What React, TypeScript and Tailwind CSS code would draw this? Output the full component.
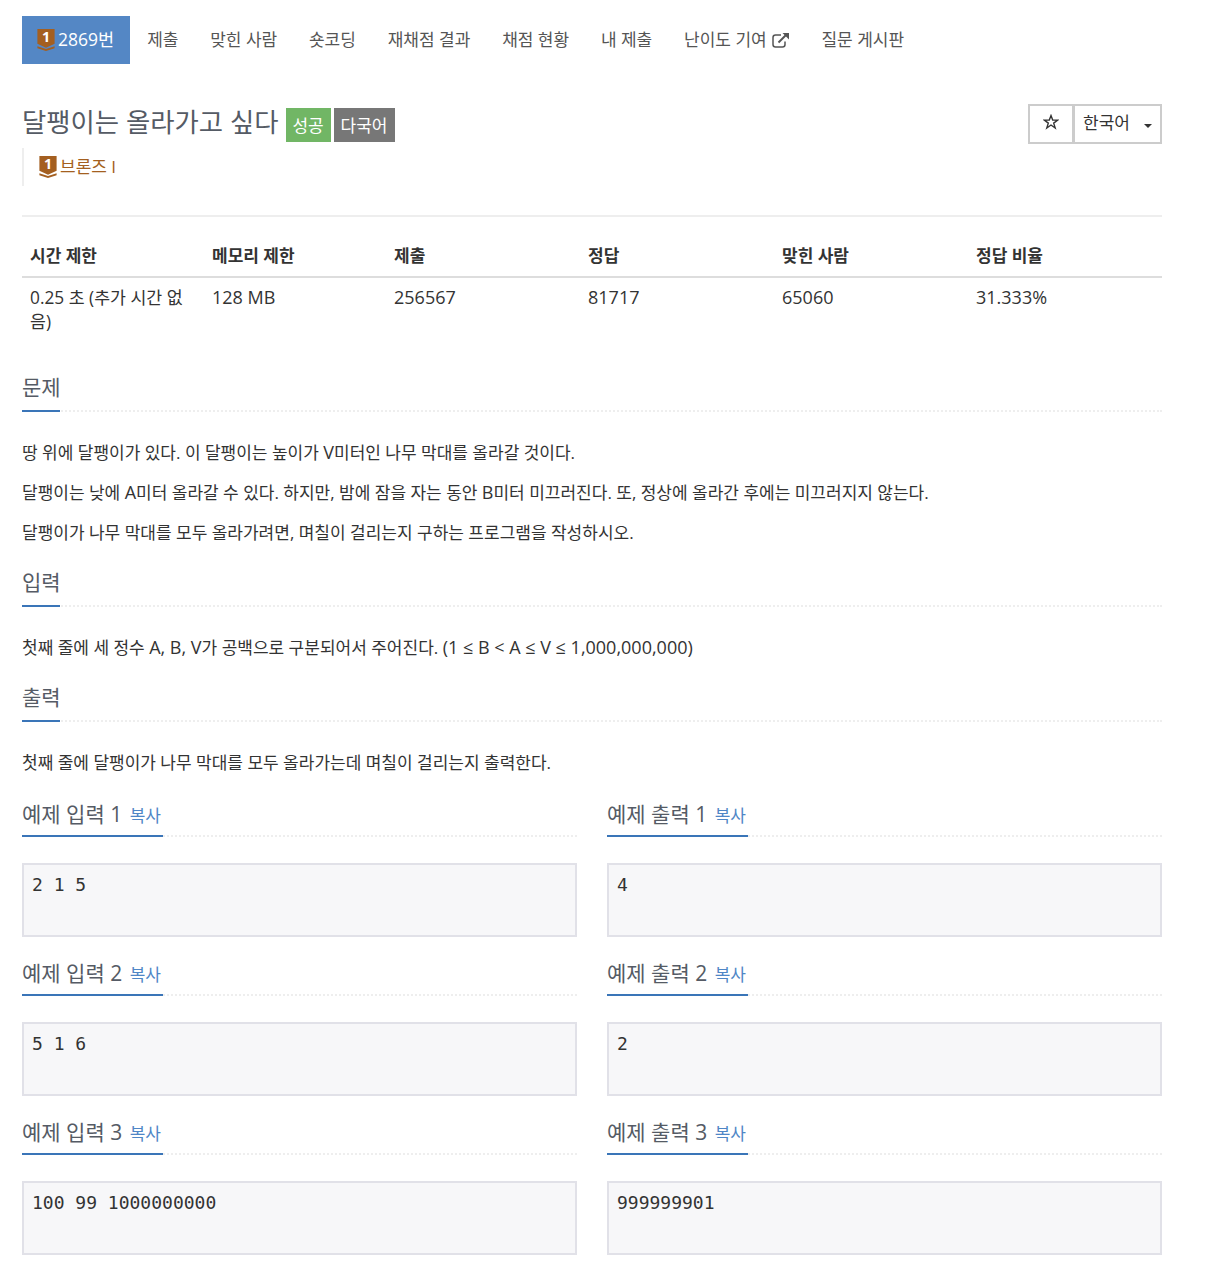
const FONT = "font-['Open_Sans','Noto_Sans_CJK_KR',sans-serif]";

const tabs = ['제출', '맞힌 사람', '숏코딩', '재채점 결과', '채점 현황', '내 제출'];

const columns = ['w-[182px]', 'w-[182px]', 'w-[194px]', 'w-[194px]', 'w-[194px]', 'w-[194px]'];
const labels = ['시간 제한', '메모리 제한', '제출', '정답', '맞힌 사람', '정답 비율'];
const values = ['128 MB', '256567', '81717', '65060', '31.333%'];

const samples = [
  { n: 1, input: '2 1 5', output: '4' },
  { n: 2, input: '5 1 6', output: '2' },
  { n: 3, input: '100 99 1000000000', output: '999999901' },
];

function TierBadge({ className }: { className: string }) {
  return (
    <svg viewBox="0 0 18 23" className={`${className} overflow-visible`}>
      <path d="M0 0H18V15.5L9 19.5L0 15.5Z" fill="#a45f20" />
      <path d="M0 18L9 21L18 18V20L9 23L0 20Z" fill="#a45f20" />
      <text x="9" y="14" textAnchor="middle" fontSize="15" fontWeight="700" fill="#ffffff" fontFamily="Open Sans, sans-serif">
        1
      </text>
    </svg>
  );
}

function ShareIcon() {
  return (
    <svg viewBox="0 0 18 16" className="h-4 w-[18px]" fill="none" stroke="currentColor">
      <path d="M9 3H3.5C2 3 1 4 1 5.5V12.5C1 14 2 15 3.5 15H10.5C12 15 13 14 13 12.5V9.5" strokeWidth="1.5" />
      <path d="M6.5 10.5L15 2" strokeWidth="2" />
      <path d="M10.5 1H17V7.5Z" fill="currentColor" stroke="none" />
    </svg>
  );
}

function StarIcon() {
  return (
    <svg viewBox="0 0 16 16" className="h-4 w-4" fill="none" stroke="#333333" strokeWidth="1.4" strokeLinejoin="miter">
      <path d="M8 1.6L9.7 6.1H14.8L10.7 9.1L12.2 14L8 11L3.8 14L5.3 9.1L1.2 6.1H6.3Z" />
    </svg>
  );
}

// latin runs are a touch larger than the hangul around them
function L({ children }: { children: React.ReactNode }) {
  return <span className="text-[18px] leading-none">{children}</span>;
}

function Headline({ children, barClass }: { children: React.ReactNode; barClass: string }) {
  return (
    <div className="flex h-[35px] border-b-2 border-dotted border-[#eeeeee]">
      <div className={`${barClass} h-[35px] whitespace-nowrap border-b-2 border-[#3a75b8] text-[21px] leading-[20px] text-[#555b65]`}>
        {children}
      </div>
    </div>
  );
}

function SampleBox({ title, n, text }: { title: string; n: number; text: string }) {
  return (
    <div>
      <Headline barClass="w-[141px] pt-[2px]">
        {title} {n} <span className="ml-[2px] text-[17px] text-[#4f86c6]">복사</span>
      </Headline>
      <pre className="mt-[26px] h-[74px] border-2 border-[#e1e1e8] bg-[#f7f7f9] px-2 pt-[7px] font-['DejaVu_Sans_Mono',monospace] text-[18px] leading-[26px] text-[#333333]">
        {text}
      </pre>
    </div>
  );
}

export default function App() {
  return (
    <div className={`${FONT} min-h-[1270px] bg-white px-[22px] pt-4 text-[#333333]`}>
      <div className="w-[1140px]">
        <nav className="flex h-12 items-center text-[17px] text-[#555555]">
          <div className="flex h-12 items-center gap-[3px] bg-[#5487c5] pl-[15px] pr-[16px] text-[17.5px] text-white">
            <TierBadge className="h-[22px] w-[18px]" />
            <span className="whitespace-nowrap pb-[2px]">2869번</span>
          </div>
          <div className="ml-[17px] flex gap-[31.8px] whitespace-nowrap">
            {tabs.map((t) => (
              <span key={t}>{t}</span>
            ))}
            <span className="flex items-center gap-[5px]">
              난이도 기여
              <ShareIcon />
            </span>
            <span>질문 게시판</span>
          </div>
        </nav>

        <div className="mt-10 flex items-start justify-between">
          <div className="flex h-[36px] items-center">
            <h1 className="whitespace-nowrap text-[26.4px] leading-[34px] text-[#555b65]">달팽이는 올라가고 싶다</h1>
            <span className="ml-[7px] mt-[6px] flex h-[34px] w-[45px] items-center justify-center bg-[#71b665] pt-[2px] text-[17px] text-white">성공</span>
            <span className="ml-[3px] mt-[6px] flex h-[34px] w-[61px] items-center justify-center bg-[#777777] pt-[2px] text-[17px] text-white">다국어</span>
          </div>
          <div className="flex h-10 text-[17px] text-[#333333]">
            <div className="flex w-[46px] items-center justify-center border-2 border-[#cccccc] pb-[4px]">
              <StarIcon />
            </div>
            <div className="-ml-px flex w-[89px] items-center border-2 border-[#cccccc] pb-[2px] pl-2">
              한국어
              <span className="ml-[14px] mt-[5px] h-0 w-0 border-x-[4px] border-t-[4px] border-x-transparent border-t-[#333333]" />
            </div>
          </div>
        </div>

        <div className="mt-[4px] flex h-[38px] items-center border-l-2 border-[#eeeeee] pl-[15px] text-[17px] text-[#a45f20]">
          <TierBadge className="h-[22px] w-[18px]" />
          <span className="ml-[3px]">브론즈 I</span>
        </div>

        <div className="mt-[29px] border-t-2 border-[#eeeeee] pt-[20px]">
          <div className="flex h-[41px] border-b-2 border-[#dddddd]">
            {labels.map((label, i) => (
              <div key={label} className={`${columns[i]} px-2 text-[17px] font-bold leading-[37px]`}>
                {label}
              </div>
            ))}
          </div>
          <div className="flex">
            <div className={`${columns[0]} break-all px-2 pt-[8px] text-[17.3px] leading-[24px]`}>0.25 초 (추가 시간 없음)</div>
            {values.map((v, i) => (
              <div key={v} className={`${columns[i + 1]} px-2 pt-[7px] text-[18px] leading-[24px]`}>
                {v}
              </div>
            ))}
          </div>
        </div>

        <section className="mt-[43px]">
          <Headline barClass="w-[38px]">문제</Headline>
          <div className="mt-[27px] flex flex-col gap-[12px] text-[17px] leading-[28px]">
            <p>땅 위에 달팽이가 있다. 이 달팽이는 높이가 <L>V</L>미터인 나무 막대를 올라갈 것이다.</p>
            <p>달팽이는 낮에 <L>A</L>미터 올라갈 수 있다. 하지만, 밤에 잠을 자는 동안 <L>B</L>미터 미끄러진다. 또, 정상에 올라간 후에는 미끄러지지 않는다.</p>
            <p>달팽이가 나무 막대를 모두 올라가려면, 며칠이 걸리는지 구하는 프로그램을 작성하시오.</p>
          </div>
        </section>

        <section className="mt-[25px]">
          <Headline barClass="w-[38px]">입력</Headline>
          <p className="mt-[27px] text-[17px] leading-[28px]">
            첫째 줄에 세 정수 <L>A, B, V</L>가 공백으로 구분되어서 주어진다. <L>(1 ≤ B &lt; A ≤ V ≤ 1,000,000,000)</L>
          </p>
        </section>

        <section className="mt-[25px]">
          <Headline barClass="w-[38px]">출력</Headline>
          <p className="mt-[27px] text-[17px] leading-[28px]">첫째 줄에 달팽이가 나무 막대를 모두 올라가는데 며칠이 걸리는지 출력한다.</p>
        </section>

        <div className="mt-[25px] grid grid-cols-2 gap-x-[30px] gap-y-[24px]">
          {samples.map((s) => [
            <SampleBox key={`i${s.n}`} title="예제 입력" n={s.n} text={s.input} />,
            <SampleBox key={`o${s.n}`} title="예제 출력" n={s.n} text={s.output} />,
          ])}
        </div>
      </div>
    </div>
  );
}
